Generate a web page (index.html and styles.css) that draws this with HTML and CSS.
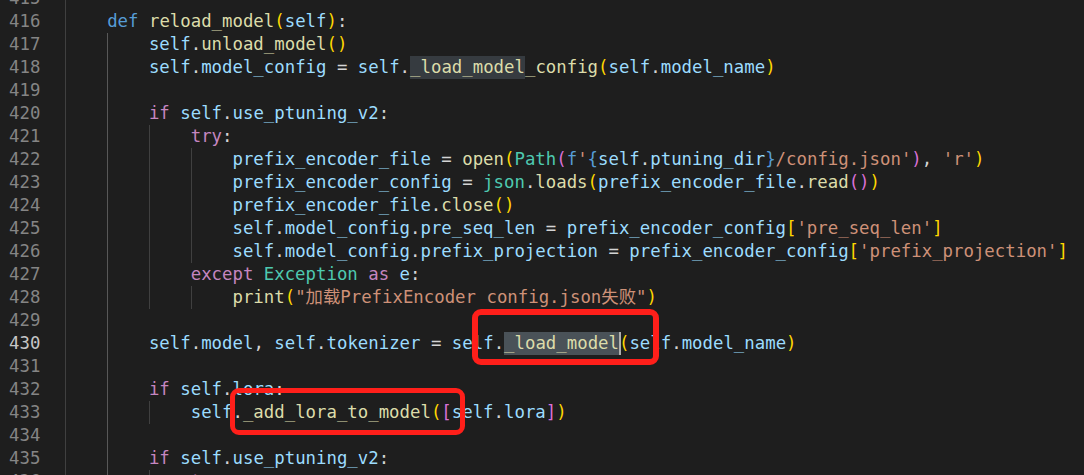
FILE: index.html
```html
<!DOCTYPE html>
<html lang="zh">
<head>
<meta charset="utf-8">
<title>editor</title>
<link rel="stylesheet" href="styles.css">
</head>
<body>
<div class="editor">
  <div class="line"><span class="ln">415</span><span class="code"><span class="ind"></span></span></div>
  <div class="line"><span class="ln">416</span><span class="code"><span class="ind"></span><span class="k">def</span> <span class="f">reload_model</span><span class="b1">(</span><span class="v">self</span><span class="b1">)</span><span class="p">:</span></span></div>
  <div class="line"><span class="ln">417</span><span class="code"><span class="ind"></span><span class="ind act"></span><span class="v">self</span><span class="p">.</span><span class="f">unload_model</span><span class="b1">()</span></span></div>
  <div class="line"><span class="ln">418</span><span class="code"><span class="ind"></span><span class="ind act"></span><span class="v">self</span><span class="p">.</span><span class="v">model_config</span> <span class="p">=</span> <span class="v">self</span><span class="p">.</span><span class="f"><span class="hl">_load_model</span>_config</span><span class="b1">(</span><span class="v">self</span><span class="p">.</span><span class="v">model_name</span><span class="b1">)</span></span></div>
  <div class="line"><span class="ln">419</span><span class="code"><span class="ind"></span><span class="ind act"></span></span></div>
  <div class="line"><span class="ln">420</span><span class="code"><span class="ind"></span><span class="ind act"></span><span class="c">if</span> <span class="v">self</span><span class="p">.</span><span class="v">use_ptuning_v2</span><span class="p">:</span></span></div>
  <div class="line"><span class="ln">421</span><span class="code"><span class="ind"></span><span class="ind act"></span><span class="ind"></span><span class="c">try</span><span class="p">:</span></span></div>
  <div class="line"><span class="ln">422</span><span class="code"><span class="ind"></span><span class="ind act"></span><span class="ind"></span><span class="ind"></span><span class="v">prefix_encoder_file</span> <span class="p">=</span> <span class="f">open</span><span class="b1">(</span><span class="t">Path</span><span class="b2">(</span><span class="k">f</span><span class="s">'</span><span class="k">{</span><span class="v">self</span><span class="p">.</span><span class="v">ptuning_dir</span><span class="k">}</span><span class="s">/config.json'</span><span class="b2">)</span><span class="p">,</span> <span class="s">'r'</span><span class="b1">)</span></span></div>
  <div class="line"><span class="ln">423</span><span class="code"><span class="ind"></span><span class="ind act"></span><span class="ind"></span><span class="ind"></span><span class="v">prefix_encoder_config</span> <span class="p">=</span> <span class="t">json</span><span class="p">.</span><span class="f">loads</span><span class="b1">(</span><span class="v">prefix_encoder_file</span><span class="p">.</span><span class="f">read</span><span class="b2">()</span><span class="b1">)</span></span></div>
  <div class="line"><span class="ln">424</span><span class="code"><span class="ind"></span><span class="ind act"></span><span class="ind"></span><span class="ind"></span><span class="v">prefix_encoder_file</span><span class="p">.</span><span class="f">close</span><span class="b1">()</span></span></div>
  <div class="line"><span class="ln">425</span><span class="code"><span class="ind"></span><span class="ind act"></span><span class="ind"></span><span class="ind"></span><span class="v">self</span><span class="p">.</span><span class="v">model_config</span><span class="p">.</span><span class="v">pre_seq_len</span> <span class="p">=</span> <span class="v">prefix_encoder_config</span><span class="b1">[</span><span class="s">'pre_seq_len'</span><span class="b1">]</span></span></div>
  <div class="line"><span class="ln">426</span><span class="code"><span class="ind"></span><span class="ind act"></span><span class="ind"></span><span class="ind"></span><span class="v">self</span><span class="p">.</span><span class="v">model_config</span><span class="p">.</span><span class="v">prefix_projection</span> <span class="p">=</span> <span class="v">prefix_encoder_config</span><span class="b1">[</span><span class="s">'prefix_projection'</span><span class="b1">]</span></span></div>
  <div class="line"><span class="ln">427</span><span class="code"><span class="ind"></span><span class="ind act"></span><span class="ind"></span><span class="c">except</span> <span class="t">Exception</span> <span class="c">as</span> <span class="v">e</span><span class="p">:</span></span></div>
  <div class="line"><span class="ln">428</span><span class="code"><span class="ind"></span><span class="ind act"></span><span class="ind"></span><span class="ind"></span><span class="f">print</span><span class="b1">(</span><span class="s">"加载PrefixEncoder config.json失败"</span><span class="b1">)</span></span></div>
  <div class="line"><span class="ln">429</span><span class="code"><span class="ind"></span><span class="ind act"></span></span></div>
  <div class="line cur"><span class="ln">430</span><span class="code"><span class="ind"></span><span class="ind act"></span><span class="v">self</span><span class="p">.</span><span class="v">model</span><span class="p">,</span> <span class="v">self</span><span class="p">.</span><span class="v">tokenizer</span> <span class="p">=</span> <span class="v">self</span><span class="p">.</span><span class="f sel">_load_model</span><span class="caret"></span><span class="b1">(</span><span class="v">self</span><span class="p">.</span><span class="v">model_name</span><span class="b1">)</span></span></div>
  <div class="line"><span class="ln">431</span><span class="code"><span class="ind"></span><span class="ind act"></span></span></div>
  <div class="line"><span class="ln">432</span><span class="code"><span class="ind"></span><span class="ind act"></span><span class="c">if</span> <span class="v">self</span><span class="p">.</span><span class="v">lora</span><span class="p">:</span></span></div>
  <div class="line"><span class="ln">433</span><span class="code"><span class="ind"></span><span class="ind act"></span><span class="ind"></span><span class="v">self</span><span class="p">.</span><span class="f">_add_lora_to_model</span><span class="b1">(</span><span class="b2">[</span><span class="v">self</span><span class="p">.</span><span class="v">lora</span><span class="b2">]</span><span class="b1">)</span></span></div>
  <div class="line"><span class="ln">434</span><span class="code"><span class="ind"></span><span class="ind act"></span></span></div>
  <div class="line"><span class="ln">435</span><span class="code"><span class="ind"></span><span class="ind act"></span><span class="c">if</span> <span class="v">self</span><span class="p">.</span><span class="v">use_ptuning_v2</span><span class="p">:</span></span></div>
  <div class="line"><span class="ln">436</span><span class="code"><span class="ind"></span><span class="ind act"></span><span class="ind"></span><span class="c">try</span><span class="p">:</span></span></div>
</div>
<div class="mark mark-a"></div>
<div class="mark mark-b"></div>
</body>
</html>
```

FILE: styles.css
```css
html, body {
  margin: 0;
  padding: 0;
  background: #1e1e1e;
  height: 475px;
  overflow: hidden;
}

body {
  position: relative;
  font-family: "DejaVu Sans Mono", "Noto Sans CJK SC", monospace;
  font-size: 17.35px;
  color: #d4d4d4;
}

.editor {
  margin-top: -13px;
  display: flex;
  flex-direction: column;
}

.line {
  display: flex;
  height: 23px;
  line-height: 23px;
  white-space: pre;
}

.ln {
  flex: 0 0 65.4px;
  box-sizing: border-box;
  padding-right: 25px;
  text-align: right;
  color: #858585;
}

.cur .ln {
  color: #c6c6c6;
}

.code {
  display: block;
  white-space: pre;
  height: 23px;
}

.ind {
  display: inline-block;
  vertical-align: top;
  width: 4ch;
  height: 23px;
  box-shadow: inset 1px 0 0 #404040;
}

.ind.act {
  box-shadow: inset 1px 0 0 #585858;
}

.k { color: #569cd6; }
.c { color: #c586c0; }
.f { color: #dcdcaa; }
.v { color: #9cdcfe; }
.t { color: #4ec9b0; }
.s { color: #ce9178; }
.p { color: #d4d4d4; }
.b1 { color: #ffd700; }
.b2 { color: #da70d6; }
.b3 { color: #179fff; }

.hl {
  display: inline-block;
  vertical-align: top;
  height: 23px;
  background: #363b40;
}

.sel {
  display: inline-block;
  vertical-align: top;
  height: 23px;
  background: #4a5258;
}

.caret {
  display: inline-block;
  vertical-align: top;
  width: 2px;
  height: 23px;
  margin-right: -2px;
  background: #aeafad;
}

.mark {
  position: absolute;
  box-sizing: border-box;
  border: 6px solid #ff1f1a;
  border-radius: 9px;
}

.mark-a {
  left: 472px;
  top: 309px;
  width: 187px;
  height: 56px;
}

.mark-b {
  left: 230px;
  top: 388px;
  width: 235px;
  height: 47px;
  border-width: 5px;
}
```
